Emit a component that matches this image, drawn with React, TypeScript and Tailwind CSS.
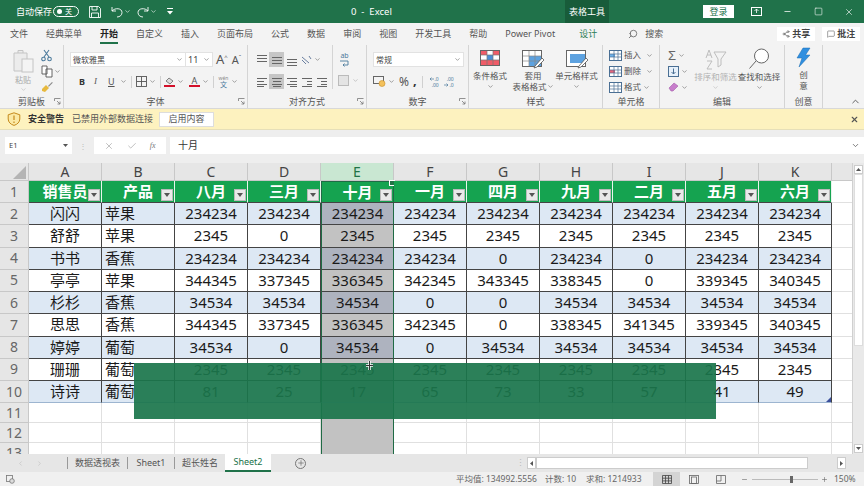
import React from 'react';
import { Search, Share2, MessageSquare, Minus, X, Square, ChevronDown, ChevronUp, ChevronLeft, ChevronRight, Plus, Check } from 'lucide-react';

const headers = ['销售员', '产品', '八月', '三月', '十月', '一月', '四月', '九月', '二月', '五月', '六月'];
const letters = ['A', 'B', 'C', 'D', 'E', 'F', 'G', 'H', 'I', 'J', 'K'];
const rows = [
    ['闪闪', '苹果', '234234', '234234', '234234', '234234', '234234', '234234', '234234', '234234', '234234'],
    ['舒舒', '苹果', '2345', '0', '2345', '2345', '2345', '2345', '2345', '2345', '2345'],
    ['书书', '香蕉', '234234', '234234', '234234', '234234', '0', '234234', '0', '234234', '234234'],
    ['亭亭', '苹果', '344345', '337345', '336345', '342345', '343345', '338345', '0', '339345', '340345'],
    ['杉杉', '香蕉', '34534', '34534', '34534', '0', '0', '34534', '34534', '34534', '34534'],
    ['思思', '香蕉', '344345', '337345', '336345', '342345', '0', '338345', '341345', '339345', '340345'],
    ['婷婷', '葡萄', '34534', '0', '34534', '0', '34534', '34534', '34534', '34534', '34534'],
    ['珊珊', '葡萄', '2345', '2345', '2345', '2345', '2345', '2345', '2345', '2345', '2345'],
    ['诗诗', '葡萄', '81', '25', '17', '65', '73', '33', '57', '41', '49'],
];
const tabs = ['文件', '经典菜单', '开始', '自定义', '插入', '页面布局', '公式', '数据', '审阅', '视图', '开发工具', '帮助', 'Power Pivot', '设计'];

const Caret = ({ className = '' }: { className?: string }) => (
    <ChevronDown size={7} strokeWidth={2} className={`text-[#666] shrink-0 ${className}`} />
);

// dialog launcher in the corner of a ribbon group
const Launcher = () => (
    <svg width="7" height="7" viewBox="0 0 7 7" className="shrink-0" fill="none" stroke="#777" strokeWidth="0.8">
        <path d="M.5 3V.5H6.5M3 3l3 3M6 3.5V6H3.5" />
    </svg>
);

// horizontal text lines for the alignment buttons
const Lines = ({ y, x }: { y: number[]; x: [number, number][] }) => (
    <svg width="12" height="12" viewBox="0 0 12 12" stroke="#666" strokeWidth="1">
        {y.map((v, i) => (
            <path key={i} d={`M${x[i][0]} ${v}H${x[i][1]}`} />
        ))}
    </svg>
);

const AlignBtn = ({ active, children }: { active?: boolean; children: React.ReactNode }) => (
    <div className={`w-[15px] h-[15px] flex items-center justify-center ${active ? 'bg-[#c6c6c6]' : ''}`}>{children}</div>
);

const Group = ({ label, width, launcher, children }: { label: string; width: string; launcher?: boolean; children: React.ReactNode }) => (
    <div className={`${width} shrink-0 h-full flex flex-col border-r border-[#d4d4d4]`}>
        <div className="h-[50px] flex">{children}</div>
        <div className="h-[12px] flex items-center relative justify-center text-[9px] leading-none text-[#555]">
            {label}
            {launcher && (
                <div className="absolute right-[2px] top-[3px]">
                    <Launcher />
                </div>
            )}
        </div>
    </div>
);

const BrushOver = () => <path d="M13 16l7-8 2 2-7 7-3 1z" fill="#fff" stroke="#555" strokeWidth=".8" />;

const MiniSheet = ({ tint }: { tint: string }) => (
    <svg width="13" height="11" viewBox="0 0 13 11" fill="none">
        <rect x=".5" y=".5" width="12" height="10" fill="#fff" stroke="#4a6f94" />
        <rect x="1" y="4" width="5" height="3" fill={tint} />
        <path d="M1 4H12M1 7H12M5 1V10M9 1V10" stroke="#4a6f94" strokeWidth=".7" />
    </svg>
);

const ribbon = (
    <div className="h-[64px] bg-[#f3f3f3] border-b border-[#d8d8d8] flex pl-0 shrink-0">
        <Group label="剪贴板" width="w-[64px]" launcher>
            <div className="flex flex-col items-center pl-[10px] pt-[4px] w-[36px]">
                <svg width="21" height="24" viewBox="0 0 21 24" fill="none" stroke="#c4c4c4">
                    <path d="M1 4H14V22H1zM5 4V1.5H10V4" fill="#ececec" />
                    <rect x="9" y="10" width="11" height="13" fill="#f4f4f4" />
                </svg>
                <span className="text-[8px] leading-none mt-[3px] text-[#aaa]">粘贴</span>
                <Caret className="mt-[2px] opacity-40" />
            </div>
            <div className="flex flex-col pl-[5px] pt-[4px] gap-[3px]">
                <svg width="11" height="13" viewBox="0 0 11 13" fill="none" stroke="#4b7a9c" strokeWidth="1.1">
                    <path d="M3 1l5 7M8 1L3 8" />
                    <circle cx="2.5" cy="10" r="1.8" />
                    <circle cx="8.5" cy="10" r="1.8" />
                </svg>
                <div className="flex items-center gap-[1px]">
                    <svg width="12" height="13" viewBox="0 0 12 13" fill="#fff" stroke="#555" strokeWidth=".9">
                        <path d="M1 1H6V9H1zM5 4H11V12H5z" />
                    </svg>
                    <Caret />
                </div>
                <svg width="12" height="12" viewBox="0 0 12 12">
                    <path d="M7 5l4-4 .8.8-4 4z" fill="#8a8a8a" />
                    <path d="M1 8l4-4 3 3-4 4-3-1z" fill="#e7b93e" />
                </svg>
            </div>
        </Group>

        <Group label="字体" width="w-[184px]" launcher>
            <div className="pl-[6px] pt-[7px] flex flex-col gap-[7px]">
                <div className="flex items-center">
                    <div className="w-[116px] h-[15px] bg-white border border-[#e2e2e2] flex items-center justify-between pl-[2px] pr-[2px] text-[8px] text-[#444]">
                        微软雅黑
                        <Caret />
                    </div>
                    <div className="w-[27px] h-[15px] bg-white border border-[#e2e2e2] border-l-0 flex items-center justify-between pl-[2px] pr-[2px] text-[9px] text-[#444]">
                        11
                        <Caret />
                    </div>
                    <span className="ml-[3px] text-[13px] leading-none text-[#555]">A</span>
                    <span className="text-[6px] leading-none text-[#555] mb-[6px]">^</span>
                    <span className="ml-[4px] text-[11px] leading-none text-[#555]">A</span>
                    <span className="text-[6px] leading-none text-[#555] mb-[6px]">ˇ</span>
                </div>
                <div className="flex items-center h-[15px] text-[#555] pl-[9px]">
                    <span className="w-[15px] text-[9px] font-bold text-[#333]">B</span>
                    <span className="w-[14px] text-[9px] italic font-['Liberation_Serif',serif]">I</span>
                    <span className="w-[12px] text-[9px] underline">U</span>
                    <Caret />
                    <div className="w-px h-[12px] bg-[#d0d0d0] ml-[4px] mr-[4px]" />
                    <svg width="11" height="11" viewBox="0 0 11 11" fill="none" stroke="#555" strokeWidth=".9">
                        <rect x=".5" y=".5" width="10" height="10" />
                        <path d="M5.5 1V10M1 5.5H10" />
                    </svg>
                    <Caret className="ml-[2px]" />
                    <div className="w-px h-[12px] bg-[#d0d0d0] ml-[4px] mr-[3px]" />
                    <div className="flex flex-col items-center w-[11px]">
                        <svg width="9" height="8" viewBox="0 0 9 8" fill="#dcdcdc" stroke="#666" strokeWidth=".8">
                            <path d="M4 1l4 3-3 3-4-3z" />
                        </svg>
                        <div className="w-[11px] h-[2px] bg-[#d3102a]" />
                    </div>
                    <Caret className="ml-[2px]" />
                    <div className="flex flex-col items-center w-[11px] ml-[5px]">
                        <span className="text-[9px] leading-[9px] text-[#555]">A</span>
                        <div className="w-[11px] h-[2px] bg-[#d3102a]" />
                    </div>
                    <Caret className="ml-[2px]" />
                    <div className="w-px h-[12px] bg-[#d0d0d0] ml-[4px] mr-[4px]" />
                    <div className="flex flex-col items-center w-[11px] leading-none">
                        <span className="text-[5px] text-[#888]">wén</span>
                        <span className="text-[7px] text-[#4b7a9c]">文</span>
                    </div>
                    <Caret className="ml-[2px]" />
                </div>
            </div>
        </Group>

        <Group label="对齐方式" width="w-[119px]" launcher>
            <div className="pl-[6px] pt-[7px] flex flex-col gap-[7px] w-[85px] border-r border-[#d4d4d4] h-[44px]">
                <div className="flex items-center">
                    <AlignBtn><Lines y={[1.5, 4.5, 7.5]} x={[[1, 11], [1, 11], [1, 11]]} /></AlignBtn>
                    <AlignBtn active><Lines y={[3.5, 6.5, 9.5]} x={[[1, 11], [1, 11], [1, 11]]} /></AlignBtn>
                    <AlignBtn><Lines y={[5.5, 8.5, 11.5]} x={[[1, 11], [1, 11], [1, 11]]} /></AlignBtn>
                    <svg width="12" height="12" viewBox="0 0 12 12" fill="none" stroke="#6a7fa0" className="ml-[1px]">
                        <path d="M2 3l7 6M2 6l4 4M9 2l2 3" />
                    </svg>
                    <Caret className="ml-[2px]" />
                </div>
                <div className="flex items-center">
                    <AlignBtn><Lines y={[2.5, 5.5, 8.5, 10.5]} x={[[1, 11], [1, 8], [1, 11], [1, 8]]} /></AlignBtn>
                    <AlignBtn active><Lines y={[2.5, 5.5, 8.5, 10.5]} x={[[1, 11], [2, 10], [1, 11], [2, 10]]} /></AlignBtn>
                    <AlignBtn><Lines y={[2.5, 5.5, 8.5, 10.5]} x={[[1, 11], [4, 11], [1, 11], [4, 11]]} /></AlignBtn>
                    <AlignBtn><Lines y={[2.5, 5.5, 8.5, 10.5]} x={[[1, 11], [6, 11], [6, 11], [1, 11]]} /></AlignBtn>
                    <AlignBtn><Lines y={[2.5, 5.5, 8.5, 10.5]} x={[[1, 11], [5, 11], [5, 11], [1, 11]]} /></AlignBtn>
                </div>
            </div>
            <div className="pl-[5px] pt-[7px] flex flex-col gap-[8px]">
                <div className="flex flex-col items-center w-[13px] h-[15px]">
                    <span className="text-[7px] leading-[8px] text-[#4b7a9c]">ab</span>
                    <svg width="11" height="7" viewBox="0 0 11 7" fill="none" stroke="#4b7a9c" strokeWidth=".9">
                        <path d="M1 1H9V5H4M5.5 3.5L4 5l1.5 1.5" />
                    </svg>
                </div>
                <div className="flex items-center gap-[3px]">
                    <div className="w-[11px] h-[11px] bg-[#e4e4e4] border border-[#bbb]" />
                    <Caret className="opacity-50" />
                </div>
            </div>
        </Group>

        <Group label="数字" width="w-[102px]" launcher>
            <div className="pl-[6px] pt-[7px] flex flex-col gap-[7px]">
                <div className="w-[91px] h-[15px] bg-white border border-[#e2e2e2] flex items-center justify-between px-[2px] text-[8px] text-[#444]">
                    常规
                    <Caret />
                </div>
                <div className="flex items-center h-[15px]">
                    <svg width="13" height="11" viewBox="0 0 13 11" fill="none" stroke="#666">
                        <rect x=".5" y=".5" width="10" height="7" fill="#f4f4f4" />
                        <circle cx="9" cy="7.5" r="3" fill="#f3c15c" stroke="#c98f27" strokeWidth=".6" />
                    </svg>
                    <Caret className="ml-[2px]" />
                    <span className="ml-[4px] text-[12px] leading-none text-[#555]">%</span>
                    <span className="ml-[4px] text-[13px] leading-none font-bold text-[#333] pb-[3px]">,</span>
                    <div className="w-px h-[12px] bg-[#d0d0d0] ml-[5px] mr-[3px]" />
                    <div className="flex flex-col items-end w-[13px] text-[5px] leading-[6px] text-[#4b7a9c]">
                        <span className="flex items-center gap-[1px]">
                            <svg width="5" height="4" viewBox="0 0 5 4" fill="none" stroke="#4b7a9c" strokeWidth=".7"><path d="M5 2H1M2.5.5L1 2l1.5 1.5" /></svg>
                            .0
                        </span>
                        <span>.00</span>
                    </div>
                    <div className="flex flex-col items-end w-[13px] ml-[2px] text-[5px] leading-[6px] text-[#4b7a9c]">
                        <span>.00</span>
                        <span className="flex items-center gap-[1px]">
                            <svg width="5" height="4" viewBox="0 0 5 4" fill="none" stroke="#4b7a9c" strokeWidth=".7"><path d="M0 2H4M2.5.5L4 2 2.5 3.5" /></svg>
                            .0
                        </span>
                    </div>
                </div>
            </div>
        </Group>

        <Group label="样式" width="w-[134px]">
            <div className="flex pt-[5px] text-[8.5px] leading-[11px] text-[#555] text-center">
                <div className="w-[42px] flex flex-col items-center">
                    <svg width="20" height="16" viewBox="0 0 20 16" fill="none">
                        <rect x=".5" y=".5" width="19" height="15" fill="#fff" stroke="#666" />
                        <rect x="1" y="1" width="6" height="4" fill="#ef5c68" />
                        <rect x="13" y="1" width="6" height="4" fill="#ef5c68" />
                        <rect x="1" y="10" width="18" height="5" fill="#ef5c68" />
                        <rect x="7" y="5" width="6" height="5" fill="#4a8fd6" />
                        <path d="M1 5H19M1 10H19M7 1V15M13 1V15" stroke="#777" strokeWidth=".7" />
                    </svg>
                    <span className="mt-[4px] whitespace-nowrap">条件格式</span>
                    <Caret className="mt-[2px]" />
                </div>
                <div className="w-[44px] flex flex-col items-center">
                    <svg width="22" height="19" viewBox="0 0 22 19" fill="none">
                        <rect x=".5" y=".5" width="19" height="16" fill="#fff" stroke="#666" />
                        <rect x="7" y="6" width="12" height="10" fill="#5da2e0" />
                        <path d="M1 6H19M1 11H19M7 1V16M13 1V16" stroke="#888" strokeWidth=".7" />
                        <BrushOver />
                    </svg>
                    <span className="mt-[1px] whitespace-nowrap">套用</span>
                    <span className="flex items-center whitespace-nowrap">表格格式<Caret /></span>
                </div>
                <div className="w-[43px] flex flex-col items-center">
                    <svg width="22" height="19" viewBox="0 0 22 19" fill="none">
                        <rect x=".5" y=".5" width="19" height="16" fill="#fff" stroke="#666" />
                        <rect x="4" y="4" width="15" height="9" fill="#5da2e0" />
                        <BrushOver />
                    </svg>
                    <span className="mt-[1px] whitespace-nowrap">单元格样式</span>
                    <Caret className="mt-[2px]" />
                </div>
            </div>
        </Group>

        <Group label="单元格" width="w-[57px]">
            <div className="pl-[6px] pt-[4px] flex flex-col gap-[4px] text-[8.5px] leading-none text-[#555]">
                <div className="flex items-center gap-[2px] h-[12px]"><MiniSheet tint="#6fb1e8" />插入<Caret className="ml-[3px]" /></div>
                <div className="flex items-center gap-[2px] h-[12px]"><MiniSheet tint="#e9657a" />删除<Caret className="ml-[3px]" /></div>
                <div className="flex items-center gap-[2px] h-[12px]"><MiniSheet tint="#ffffff" />格式<Caret /></div>
            </div>
        </Group>

        <Group label="编辑" width="w-[125px]">
            <div className="pl-[8px] pt-[3px] flex flex-col gap-[2px] w-[34px]">
                <div className="flex items-center h-[14px] gap-[2px]">
                    <span className="text-[13px] leading-none text-[#666] font-['Liberation_Sans',sans-serif]">Σ</span>
                    <Caret />
                </div>
                <div className="flex items-center h-[14px] gap-[2px]">
                    <svg width="11" height="11" viewBox="0 0 11 11" fill="#e6f0fa" stroke="#4a6f94">
                        <rect x=".5" y=".5" width="10" height="10" />
                        <path d="M5.5 2.5V8M3.5 6l2 2 2-2" fill="none" />
                    </svg>
                    <Caret />
                </div>
                <div className="flex items-center h-[14px] gap-[2px]">
                    <svg width="11" height="10" viewBox="0 0 11 10">
                        <path d="M1 6l5-5 4 3-5 5H3z" fill="#c77ecb" stroke="#a45cab" strokeWidth=".6" />
                    </svg>
                    <Caret />
                </div>
            </div>
            <div className="w-[43px] flex flex-col items-center pt-[4px] text-[8.5px] leading-[11px] text-[#b2b2b2]">
                <svg width="22" height="21" viewBox="0 0 22 21" fill="none" stroke="#bdbdbd">
                    <path d="M1 9l3-8 3 8M2 6H6M2 12H7L2 20H7M9 3H21L16 10V16L13 18V10z" />
                </svg>
                <span className="whitespace-nowrap mt-[1px]">排序和筛选</span>
                <Caret className="opacity-40 mt-[2px]" />
            </div>
            <div className="w-[44px] flex flex-col items-center pt-[3px] text-[8.5px] leading-[11px] text-[#555]">
                <svg width="22" height="22" viewBox="0 0 22 22" fill="none" stroke="#666">
                    <circle cx="13.5" cy="8" r="7" fill="#fff" />
                    <path d="M8 13L1.5 20.5" />
                </svg>
                <span className="whitespace-nowrap mt-[1px]">查找和选择</span>
                <Caret className="mt-[2px]" />
            </div>
        </Group>

        <Group label="创意" width="w-[38px]">
            <div className="w-full flex flex-col items-center pt-[2px] text-[8.5px] leading-[11px] text-[#555]">
                <svg width="15" height="21" viewBox="0 0 15 21">
                    <path d="M7 1h7L9.5 8H14L3 20l3-9H1z" fill="#2f8fe0" stroke="#1c6db0" strokeWidth=".5" />
                </svg>
                <span className="mt-[1px]">创</span>
                <span>意</span>
            </div>
        </Group>

        <div className="flex-1 flex items-end justify-end pr-[3px] pb-[1px]">
            <ChevronUp size={11} className="text-[#555]" />
        </div>
    </div>
);

const cellBg = (rowIdx: number, col: number) => {
    const band = rowIdx % 2 === 0;
    if (col === 4) return band ? 'bg-[#aeb3bf]' : 'bg-[#c2c2c2]';
    return band ? 'bg-[#dde8f4]' : 'bg-white';
};

export default function App() {
    return (
        <div className="w-[864px] h-[486px] overflow-hidden flex flex-col bg-[#f0f0f0] font-['Noto_Sans','Noto_Sans_CJK_SC',sans-serif]">
            {/* Title bar */}
            <div className="h-[23px] bg-[#20724a] flex items-center shrink-0 text-white">
                <span className="ml-[16px] w-[37px] text-[9px] leading-none whitespace-nowrap">自动保存</span>
                <div className="w-[26px] h-[11px] rounded-full border border-white flex items-center pl-[3px] gap-[3px]">
                    <div className="w-[5px] h-[5px] rounded-full bg-white" />
                    <span className="text-[7px] leading-none">关</span>
                </div>
                <svg width="12" height="12" viewBox="0 0 12 12" fill="none" stroke="#fff" strokeWidth=".9" className="ml-[10px]">
                    <path d="M.5.5H9.5L11.5 2.5V11.5H.5zM3 .5V4H8V.5M2.5 11.5V7H9.5V11.5" />
                </svg>
                <svg width="12" height="12" viewBox="0 0 12 12" fill="none" stroke="#fff" strokeWidth=".9" className="ml-[10px]">
                    <path d="M1 1V5H5M1 5C4 1.5 11 2 11 6.5 11 9 9 11 6 11" />
                </svg>
                <ChevronDown size={7} className="ml-[1px]" />
                <svg width="12" height="12" viewBox="0 0 12 12" fill="none" stroke="#fff" strokeWidth=".9" className="ml-[6px]">
                    <path d="M11 1V5H7M11 5C8 1.5 1 2 1 6.5 1 9 3 11 6 11" />
                </svg>
                <ChevronDown size={7} className="ml-[1px]" />
                <svg width="6" height="7" viewBox="0 0 6 7" fill="#fff" className="ml-[10px]">
                    <path d="M0 0H6V1H0zM0 3H6L3 6.5z" />
                </svg>
                <span className="ml-[178px] w-[214px] text-[9.5px] leading-none whitespace-nowrap">0&nbsp;&nbsp;-&nbsp;&nbsp;Excel</span>
                <div className="w-[44px] h-[23px] bg-[#185c3a] text-[9px] flex items-center justify-center whitespace-nowrap">表格工具</div>
                <div className="ml-[94px] w-[31px] h-[13px] bg-white text-[#20724a] text-[9px] leading-none flex items-center justify-center">登录</div>
                <svg width="11" height="9" viewBox="0 0 11 9" fill="none" stroke="#fff" className="ml-[17px]">
                    <rect x=".5" y=".5" width="10" height="8" />
                    <path d="M3.5 4l2-2 2 2M5.5 2V6" strokeWidth=".8" />
                </svg>
                <Minus size={9} className="ml-[21px]" />
                <Square size={9} className="ml-[22px]" strokeWidth={1.5} />
                <X size={10} className="ml-[21px]" strokeWidth={1.5} />
            </div>

            {/* Menu tabs */}
            <div className="h-[22px] bg-[#f3f3f3] flex items-center shrink-0 pl-[10px] text-[9px] text-[#555] gap-[18px]">
                {tabs.map((t) => (
                    <div key={t} className={`h-[22px] flex items-center relative whitespace-nowrap ${t === '开始' ? 'font-bold text-[#222]' : ''} ${t === '设计' ? 'ml-[6px] text-[#2e7d56]' : ''}`}>
                        {t}
                        {t === '开始' && <div className="absolute left-0 right-0 bottom-[1px] h-[2px] bg-[#20724a]" />}
                    </div>
                ))}
                <div className="flex items-center gap-[7px] ml-[13px]">
                    <Search size={10} className="text-[#666] -scale-x-100" />
                    搜索
                </div>
                <div className="ml-[96px] w-[38px] h-[14px] bg-white flex items-center justify-center gap-[2px] text-[#444] font-bold shrink-0">
                    <Share2 size={8} strokeWidth={1.5} />共享
                </div>
                <div className="-ml-[11px] w-[38px] h-[14px] bg-white flex items-center justify-center gap-[2px] text-[#444] font-bold shrink-0">
                    <MessageSquare size={8} strokeWidth={1.5} />批注
                </div>
            </div>

            {ribbon}

            {/* Security warning */}
            <div className="h-[21px] bg-[#fdf2bf] border-b border-[#e6dfb8] flex items-center shrink-0 text-[9px] text-[#555]">
                <svg width="14" height="14" viewBox="0 0 14 14" className="ml-[7px]">
                    <path d="M7 .8L12.8 2.8V7C12.8 10 10.5 12.4 7 13.4 3.5 12.4 1.2 10 1.2 7V2.8z" fill="#fbe9a4" stroke="#c58a1c" />
                    <path d="M7 3.5V8M7 9.5V11" stroke="#c58a1c" strokeWidth="1.2" />
                </svg>
                <span className="ml-[7px] font-bold text-[#333]">安全警告</span>
                <span className="ml-[8px] w-[87px] whitespace-nowrap">已禁用外部数据连接</span>
                <div className="w-[55px] h-[15px] bg-white border border-[#ddd] flex items-center justify-center">启用内容</div>
                <X size={9} strokeWidth={3} className="ml-auto mr-[5px] text-[#555]" />
            </div>

            {/* Formula bar */}
            <div className="h-[33px] pt-[7px] flex items-start shrink-0 bg-[#eeeeee]">
                <div className="ml-[5px] w-[67px] h-[17px] bg-white flex items-center justify-between px-[4px] text-[7.5px] text-[#444]">
                    E1
                    <svg width="5" height="3" viewBox="0 0 5 3" fill="#555"><path d="M0 0H5L2.5 3z" /></svg>
                </div>
                <div className="w-[22px] h-[17px] flex items-center justify-center text-[#bbb] text-[8px]">⋮</div>
                <div className="w-[72px] h-[17px] bg-white flex items-center justify-around px-[4px] text-[#b5b5b5]">
                    <X size={10} />
                    <Check size={10} />
                    <span className="text-[8px] italic text-[#777] font-['Liberation_Serif',serif]">fx</span>
                </div>
                <div className="ml-[4px] flex-1 h-[17px] bg-white flex items-center justify-between pl-[8px] pr-[4px] text-[10px] text-[#333]">
                    十月
                    <ChevronDown size={9} className="text-[#555]" />
                </div>
            </div>

            {/* Sheet */}
            <div className="flex-1 min-h-0 flex relative overflow-hidden">
                <div className="w-[852px] shrink-0 bg-white">
                    <div className="grid grid-cols-[29px_repeat(11,73px)_20px] text-[15px] leading-none text-[#1a1a1a]">
                        {/* column letters */}
                        <div className="h-[18px] bg-[#e6e6e6] border-r border-b border-[#c8c8c8] flex items-end justify-end">
                            <svg width="13" height="13" viewBox="0 0 13 13" fill="#b4b4b4" className="mr-[2px] mb-[1px]"><path d="M13 0V13H0z" /></svg>
                        </div>
                        {letters.map((l) => (
                            <div key={l} className={`h-[18px] border-r border-b border-[#c8c8c8] flex items-center justify-center text-[14px] ${l === 'E' ? 'bg-[#c9e7d2] text-[#217346]' : 'bg-[#e6e6e6] text-[#444]'}`}>{l}</div>
                        ))}
                        <div className="h-[18px] bg-[#e6e6e6] border-b border-[#c8c8c8]" />

                        {/* header row */}
                        <div className="h-[22px] bg-[#e6e6e6] border-r border-b border-[#c8c8c8] flex items-center justify-center text-[14px] text-[#666]">1</div>
                        {headers.map((h, i) => (
                            <div key={h} className={`h-[22px] relative bg-[#15a350] border-b border-[#444] flex items-center justify-center text-white font-bold ${i === 4 ? 'border-x border-t border-x-[#1f6b45] border-t-[#1f6b45]' : 'border-r border-r-[#e8f5ec]'}`}>
                                {h}
                                <div className="absolute right-[1px] bottom-[1px] w-[12px] h-[12px] bg-[#e9e9e9] border border-[#bbb] flex items-center justify-center">
                                    <svg width="6" height="4" viewBox="0 0 6 4" fill="#555"><path d="M0 0H6L3 4z" /></svg>
                                </div>
                                {i === 4 && <div className="absolute -right-[2px] -top-[2px] w-[4px] h-[4px] bg-[#217346] border border-white box-content" />}
                            </div>
                        ))}
                        <div className="h-[22px] border-b border-[#e0e0e0]" />

                        {/* data rows */}
                        {rows.map((r, ri) => (
                            <React.Fragment key={r[0]}>
                                <div className="h-[22.25px] bg-[#e6e6e6] border-r border-b border-[#c8c8c8] flex items-center justify-center text-[14px] text-[#666]">{ri + 2}</div>
                                {r.map((v, ci) => (
                                    <div key={ci} className={`h-[22.25px] relative flex items-center border-b whitespace-nowrap ${ri === 8 ? 'border-b-[#9db5d0]' : 'border-b-[#444]'} ${ci === 1 ? 'justify-start pl-[3px]' : 'justify-center'} ${ci === 4 ? 'border-x border-x-[#1f6b45]' : 'border-r border-r-[#444]'} ${cellBg(ri, ci)}`}>
                                        {v}
                                        {ri === 8 && ci === 10 && (
                                            <svg width="5" height="5" viewBox="0 0 5 5" fill="#3b4f9c" className="absolute right-0 bottom-0"><path d="M5 0V5H0z" /></svg>
                                        )}
                                    </div>
                                ))}
                                <div className="h-[22.25px] border-b border-[#e0e0e0]" />
                            </React.Fragment>
                        ))}

                        {/* empty rows */}
                        {[11, 12, 13].map((n) => (
                            <React.Fragment key={n}>
                                <div className="h-[20px] bg-[#e6e6e6] border-r border-b border-[#c8c8c8] flex items-center justify-center text-[14px] text-[#666]">{n}</div>
                                {letters.map((l) => (
                                    <div key={l} className={`h-[20px] ${l === 'E' ? 'bg-[#c2c2c2] border-x border-x-[#1f6b45]' : 'border-r border-b border-[#e0e0e0]'}`} />
                                ))}
                                <div className="h-[20px] border-b border-[#e0e0e0]" />
                            </React.Fragment>
                        ))}
                    </div>
                </div>

                {/* vertical scrollbar */}
                <div className="w-[12px] flex flex-col items-center bg-[#e9e9e9] border-l border-[#d0d0d0] pt-[2px]">
                    <div className="w-[9px] h-[9px] bg-white border border-[#ccc] flex items-center justify-center">
                        <svg width="5" height="3" viewBox="0 0 5 3" fill="#555"><path d="M0 3H5L2.5 0z" /></svg>
                    </div>
                    <div className="w-[9px] h-[172px] bg-white border border-[#ddd]" />
                    <div className="mt-auto mb-[1px] w-[9px] h-[9px] bg-white border border-[#ccc] flex items-center justify-center">
                        <svg width="5" height="3" viewBox="0 0 5 3" fill="#555"><path d="M0 0H5L2.5 3z" /></svg>
                    </div>
                </div>

                {/* green banner lying over the table */}
                <div className="absolute left-[134px] top-[200px] w-[582px] h-[56px] bg-[#1a754b]/[0.92]" />
                {/* mouse cursor */}
                <svg width="9" height="11" viewBox="0 0 9 11" className="absolute left-[365px] top-[197px]" fill="none">
                    <path d="M4.5 1V10M1 5.5H8" stroke="#fff" strokeWidth="2.4" />
                    <path d="M4.5 1V10M1 5.5H8" stroke="#333" strokeWidth="1" />
                </svg>
            </div>

            {/* Sheet tabs */}
            <div className="h-[18px] bg-[#e6e6e6] flex items-center shrink-0 text-[9px] text-[#555]">
                <ChevronLeft size={7} className="ml-[17px] text-[#bbb]" />
                <ChevronRight size={7} className="ml-[12px] text-[#bbb]" />
                <div className="ml-[24px] w-px h-[12px] bg-[#999]" />
                <span className="w-[59px] text-center whitespace-nowrap">数据透视表</span>
                <div className="w-px h-[12px] bg-[#999]" />
                <span className="w-[46px] text-center">Sheet1</span>
                <div className="w-px h-[12px] bg-[#999]" />
                <span className="w-[50px] text-center whitespace-nowrap">超长姓名</span>
                <div className="w-[46px] h-[18px] bg-white border-b-2 border-[#20724a] flex items-center justify-center text-[#20724a]">Sheet2</div>
                <div className="ml-[24px] w-[11px] h-[11px] rounded-full border border-[#777] flex items-center justify-center">
                    <Plus size={8} className="text-[#666]" />
                </div>
                <span className="ml-[210px] text-[#bbb] w-[11px]">⋮</span>
                <div className="w-[9px] h-[12px] bg-white border border-[#ccc] flex items-center justify-center">
                    <svg width="3" height="5" viewBox="0 0 3 5" fill="#555"><path d="M3 0V5L0 2.5z" /></svg>
                </div>
                <div className="w-[272px] h-[12px] bg-white border border-[#ccc]" />
                <div className="w-[29px]" />
                <div className="w-[9px] h-[12px] bg-white border border-[#ccc] flex items-center justify-center">
                    <svg width="3" height="5" viewBox="0 0 3 5" fill="#555"><path d="M0 0V5L3 2.5z" /></svg>
                </div>
            </div>

            {/* Status bar */}
            <div className="h-[14px] bg-[#f0f0f0] flex items-center shrink-0 text-[8.5px] text-[#666] whitespace-nowrap">
                <svg width="9" height="9" viewBox="0 0 9 9" fill="none" stroke="#777" strokeWidth=".8" className="ml-[6px]">
                    <rect x=".5" y=".5" width="6" height="6" />
                    <circle cx="6" cy="6" r="2.3" fill="#ddd" />
                </svg>
                <span className="ml-[441px] w-[89px]">平均值: 134992.5556</span>
                <span className="w-[41px]">计数: 10</span>
                <span className="w-[67px]">求和: 1214933</span>
                <div className="w-[27px] h-[14px] bg-[#d4d4d4] flex items-center justify-center">
                    <svg width="10" height="9" viewBox="0 0 10 9" fill="none" stroke="#444" strokeWidth=".8">
                        <path d="M.5.5H9.5V8.5H.5zM.5 3.2H9.5M.5 5.9H9.5M3.5.5V8.5M6.5.5V8.5" />
                    </svg>
                </div>
                <svg width="10" height="9" viewBox="0 0 10 9" fill="none" stroke="#666" strokeWidth=".8" className="ml-[9px]">
                    <rect x=".5" y=".5" width="9" height="8" />
                    <rect x="2.5" y="2" width="5" height="6.5" />
                </svg>
                <svg width="10" height="9" viewBox="0 0 10 9" fill="none" stroke="#666" strokeWidth=".8" className="ml-[17px]">
                    <path d="M.5.5H9.5V8.5H.5zM5 .5V6M.5 6H5" />
                </svg>
                <Minus size={7} className="ml-[15px]" />
                <div className="ml-[4px] w-[66px] h-px bg-[#bbb] relative">
                    <div className="absolute left-[38px] -top-[3px] w-[3px] h-[7px] bg-[#666]" />
                </div>
                <Plus size={7} className="ml-[3px]" />
                <span className="ml-[6px]">150%</span>
            </div>
        </div>
    );
}
